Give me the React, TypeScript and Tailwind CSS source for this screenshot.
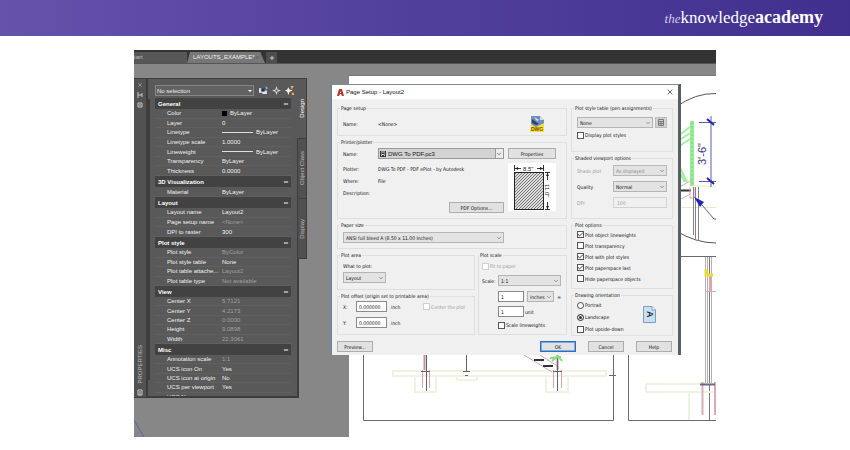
import type { ReactNode } from "react";
import { Check, ChevronDown, Minus, Plus, X } from "lucide-react";

type Property = {
  label: string;
  value: string;
  muted?: boolean;
  line?: boolean;
  swatch?: boolean;
};

type PropertySection = {
  title: string;
  height: string;
  rows: Property[];
};

const SECTIONS: PropertySection[] = [
  {
    title: "General",
    height: "h-[78px]",
    rows: [
      { label: "Color", value: "ByLayer", swatch: true },
      { label: "Layer", value: "0" },
      { label: "Linetype", value: "ByLayer", line: true },
      { label: "Linetype scale", value: "1.0000" },
      { label: "Lineweight", value: "ByLayer", line: true },
      { label: "Transparency", value: "ByLayer" },
      { label: "Thickness", value: "0.0000" },
    ],
  },
  {
    title: "3D Visualization",
    height: "h-[21px]",
    rows: [{ label: "Material", value: "ByLayer" }],
  },
  {
    title: "Layout",
    height: "h-[40px]",
    rows: [
      { label: "Layout name", value: "Layout2" },
      { label: "Page setup name", value: "<None>", muted: true },
      { label: "DPI to raster", value: "300" },
    ],
  },
  {
    title: "Plot style",
    height: "h-[49px]",
    rows: [
      { label: "Plot style", value: "ByColor", muted: true },
      { label: "Plot style table", value: "None" },
      { label: "Plot table attache...", value: "Layout2", muted: true },
      { label: "Plot table type", value: "Not available", muted: true },
    ],
  },
  {
    title: "View",
    height: "h-[58px]",
    rows: [
      { label: "Center X", value: "5.7121", muted: true },
      { label: "Center Y", value: "4.2173", muted: true },
      { label: "Center Z", value: "0.0000", muted: true },
      { label: "Height", value: "9.0898", muted: true },
      { label: "Width", value: "22.3061", muted: true },
    ],
  },
  {
    title: "Misc",
    height: "h-[58px]",
    rows: [
      { label: "Annotation scale", value: "1:1", muted: true },
      { label: "UCS icon On", value: "Yes" },
      { label: "UCS icon at origin", value: "No" },
      { label: "UCS per viewport", value: "Yes" },
      { label: "UCS Name", value: "" },
    ],
  },
];

const PLOT_OPTIONS = [
  { label: "Plot object lineweights", checked: true },
  { label: "Plot transparency", checked: false },
  { label: "Plot with plot styles", checked: true },
  { label: "Plot paperspace last", checked: true },
  { label: "Hide paperspace objects", checked: false },
];

function Group({
  title,
  className = "",
  children,
}: {
  title: string;
  className?: string;
  children: ReactNode;
}) {
  return (
    <fieldset className={`min-w-0 border border-[#dfdfdf] px-[5px] ${className}`}>
      <legend className="-ml-[3px] h-2 px-px leading-[8px]">{title}</legend>
      {children}
    </fieldset>
  );
}

function Select({
  label,
  value,
  className = "",
  disabled = false,
}: {
  label: string;
  value: string;
  className?: string;
  disabled?: boolean;
}) {
  return (
    <span className={`grid h-[11px] items-center ${className}`}>
      <select
        aria-label={label}
        defaultValue={value}
        disabled={disabled}
        className="col-start-1 row-start-1 h-full w-full appearance-none border border-[#b4b4b4] bg-[#e3e3e3] pl-[2px] leading-[8px] disabled:border-[#b8b8b8] disabled:text-[#8a8a8a]"
      >
        <option>{value}</option>
      </select>
      <ChevronDown
        className="pointer-events-none col-start-1 row-start-1 mr-[2px] justify-self-end text-[#444]"
        size={6}
      />
    </span>
  );
}

function CheckBox({
  label,
  checked = false,
  disabled = false,
}: {
  label: string;
  checked?: boolean;
  disabled?: boolean;
}) {
  return (
    <label
      className={`flex items-center gap-px whitespace-nowrap ${disabled ? "text-[#9a9a9a]" : ""}`}
    >
      <span className="grid size-[7px] shrink-0">
        <input
          type="checkbox"
          defaultChecked={checked}
          disabled={disabled}
          className="peer col-start-1 row-start-1 size-[7px] appearance-none border border-[#555] bg-white disabled:border-[#cfcfcf]"
        />
        <Check
          className="pointer-events-none invisible col-start-1 row-start-1 text-[#222] peer-checked:visible"
          size={7}
          strokeWidth={3}
        />
      </span>
      {label}
    </label>
  );
}

function Radio({ label, checked = false }: { label: string; checked?: boolean }) {
  return (
    <label className="flex h-3 items-center gap-px">
      <input
        type="radio"
        name="orientation"
        defaultChecked={checked}
        className="size-[7px] shrink-0 appearance-none rounded-full border border-[#444] bg-white checked:bg-[#333] checked:shadow-[inset_0_0_0_1px_#fff]"
      />
      {label}
    </label>
  );
}

function NumberBox({ label, value, className }: { label: string; value: string; className: string }) {
  return (
    <input
      type="text"
      aria-label={label}
      defaultValue={value}
      className={`h-[11px] border border-[#8a8a8a] bg-white pl-[2px] leading-[8px] ${className}`}
    />
  );
}

function PushButton({ children, className = "" }: { children: ReactNode; className?: string }) {
  return (
    <button
      type="button"
      className={`h-[11px] border bg-[#e1e1e1] text-center leading-[8px] ${className}`}
    >
      {children}
    </button>
  );
}

function Drawing() {
  return (
    <svg
      className="h-full w-full"
      viewBox="134 64 582 373"
      preserveAspectRatio="xMinYMin slice"
      fill="none"
    >
      <rect x="134" y="64" width="582" height="373" fill="#878787" />
      <path d="M348 75.500H716" stroke="#777" />
      <rect x="349" y="76" width="367" height="361" fill="#fff" />
      <path d="M134 420 144 437" stroke="#5763b5" />

      {/* viewport frames */}
      <g stroke="#6b6b6b">
        <path d="M363.500 340V420.500H613.500V340" />
        <path d="M716 420.500H628.500V256.500H716" />
        <path d="M609 375.500H616" />
      </g>

      {/* footing on the left sheet */}
      <g stroke="#f0f3e2" strokeWidth="2">
        <path d="M393 371H606V376H393Z" />
        <path d="M415 377V392H436V377M546 377V392H568V377M457 377V380H477V377" />
      </g>
      <g stroke="#d9a3ab">
        <path d="M422.500 370V388M429.500 370V388M553.500 370V388M561.500 370V388" />
        <path d="M524 355 552 372M540 355 559 367" />
      </g>
      <path d="M424.500 355V370M557.500 355V370" stroke="#c1959e" strokeWidth="2" />
      <path
        d="M426.500 355V391M557.500 355V391M466.500 355V371M421 371.500H430M553 371.500H562M463 371.500H470M465 375.500H468"
        stroke="#62626c"
      />
      <path d="M534 360H544M543 366H553" stroke="#333" strokeWidth="2" />
      <path d="M550 358 561 357M552 361 558 356 562 361" stroke="#83dc83" strokeWidth="2" />

      {/* detail bubble */}
      <path d="M676 107Q695 93 716 93.500M676 231Q696 243 716 243" stroke="#555" />
      <path d="M692 121V186" stroke="#98ec98" strokeWidth="4" />
      <path d="M692 122V186" stroke="#6fdc6f" strokeDasharray="2 2" />
      <path
        d="M678 136 690 127M678 141 690 133M678 147 690 139M678 164 687 182M678 170 685 182"
        stroke="#a1eda1"
        strokeWidth="2"
      />
      <path d="M678 190.500H691" stroke="#333" strokeWidth="2" />
      <path d="M678 188 692 180M678 201 690 194M690 187V198H694V187" stroke="#e0a9b5" />
      <path d="M693 186H716M678 207.500H716" stroke="#e0eec6" />
      <path d="M693.500 187V235M695.500 187V239M698.500 187V241" stroke="#8c7d8a" />
      <path d="M711 116V187M699 122.500H716M699 181.500H716" stroke="#5c5ca8" />
      <path d="M707 119 714 125M707 178 714 184" stroke="#2424b5" strokeWidth="2" />
      <path d="M694 197 704 202 700 207Z" fill="#2424b5" />
      <path d="M702 205 714 219H716" stroke="#5c5ca8" />
      <text
        transform="rotate(-90 706 165)"
        x="706"
        y="165"
        fontSize="11"
        fill="#34347e"
        fontFamily="Liberation Sans, sans-serif"
      >
        3'-6"
      </text>

      {/* column on the right sheet */}
      <path d="M705.500 257V384M707.500 257V384M711.500 257V384" stroke="#b0b0b0" />
      <path d="M709.500 257V420" stroke="#777" />
      <path d="M710.500 276V291" stroke="#dda4ad" strokeWidth="3" />
      <path d="M706 269V275H713" stroke="#e9de32" strokeWidth="3" />
      <path d="M705 291.500H716" stroke="#c8adb3" />
      <path d="M646 384H716M646 392H716M646 384V392M689 393V420" stroke="#eef2df" strokeWidth="2" />
      <path d="M702.500 382V415M715 382V415" stroke="#d9adb5" strokeWidth="2" />
      <path d="M700 384.500H715" stroke="#646c88" strokeWidth="2" />
    </svg>
  );
}

function PropertiesPalette() {
  return (
    <section className="absolute top-[14px] left-0 flex font-['Liberation_Sans',Arial,sans-serif] text-[6px] leading-[8px] text-[#f0f0f0]">
      <header className="flex w-3 flex-col items-center justify-between border-y border-[#3a3a3a] bg-[#525252] pt-[3px] text-[#c8c8c8]">
        <div className="flex flex-col items-center gap-1">
          <X size={6} />
          <svg width="6" height="6" viewBox="0 0 6 6" stroke="currentColor" fill="none">
            <path d="M1 0V6M5 1V5M1 3H5" />
          </svg>
          <svg width="6" height="6" viewBox="0 0 6 6" stroke="currentColor" fill="none">
            <path d="M1 1H5V5H1ZM2 3H4" />
          </svg>
        </div>
        <div className="flex flex-col items-center gap-[5px] pb-px">
          <h2 className="rotate-180 text-[#bdbdbd] [writing-mode:vertical-rl]">PROPERTIES</h2>
          <svg width="6" height="7" viewBox="0 0 6 7" stroke="currentColor" fill="none">
            <path d="M1 1H5V6H1ZM2 3H4M2 5H4" />
          </svg>
        </div>
      </header>
      <div className="flex h-[320px] w-[153px] gap-[5px] overflow-hidden border-2 border-t border-[#3d3d3d] bg-[#595959] pr-[6px]">
        <div className="mt-5 mb-4 w-[2px] shrink-0 bg-[#3c3c3c]" />
        <div className="min-w-0 flex-1 pt-[6px]">
          <div className="mb-[2px] flex h-[11px] items-center gap-[7px]">
            <span className="grid h-full w-[99px] shrink-0 items-center">
              <select
                aria-label="Selection"
                className="col-start-1 row-start-1 h-full w-full appearance-none border border-[#858585] bg-[#626262] pl-px text-[#eee]"
              >
                <option>No selection</option>
              </select>
              <span className="pointer-events-none col-start-1 row-start-1 mr-[2px] justify-self-end border-x-2 border-t-2 border-x-transparent border-t-white" />
            </span>
            <svg className="-ml-[2px] size-[9px] shrink-0" viewBox="0 0 8 8">
              <path d="M0 2H4V6H0ZM3 4H7V7H3Z" fill="#e0e5ee" />
              <path d="M2 2H5V5H2Z" fill="#23304a" />
              <path d="M6 0 8 2 6 3Z" fill="#8cb5e0" />
            </svg>
            <svg className="-mx-[3px] size-[9px] shrink-0" viewBox="0 0 8 8">
              <path d="M4 0 5 3 8 4 5 5 4 8 3 5 0 4 3 3Z" fill="#ddd" />
              <circle cx="4" cy="4" r="1" fill="#555" />
            </svg>
            <svg className="size-[9px] shrink-0" viewBox="0 0 8 8">
              <path d="M3 1 4 3 7 4 4 5 3 8 2 5 0 4 2 3Z" fill="#eee" />
              <path d="M5 0H8L6 3ZM6 6H8V8H6Z" fill="#f3a354" />
            </svg>
          </div>
          {SECTIONS.map((section) => (
            <section key={section.title} className={`flex flex-col ${section.height}`}>
              <h3 className="flex h-[11px] shrink-0 items-center justify-between bg-[#424242] pr-[2px] pl-[3px] font-bold text-white">
                {section.title}
                <Minus size={6} strokeWidth={4} />
              </h3>
              <dl className="flex flex-1 flex-col">
                {section.rows.map((row) => (
                  <div
                    key={row.label}
                    className="flex min-h-[9px] flex-1 items-center border-b border-[#606060] pl-3"
                  >
                    <dt className="w-[55px] shrink-0 whitespace-nowrap">{row.label}</dt>
                    <dd
                      className={`flex items-center gap-[3px] whitespace-nowrap ${row.muted ? "text-[#a0a0a0]" : ""}`}
                    >
                      {row.swatch && <span className="size-[5px] bg-black" />}
                      {row.line && <span className="h-px w-[31px] bg-[#ddd]" />}
                      {row.value}
                    </dd>
                  </div>
                ))}
              </dl>
            </section>
          ))}
        </div>
      </div>
      <nav className="-ml-[2px] flex w-[10px] flex-col items-center text-[#bdbdbd]">
        <button
          type="button"
          className="flex h-[61px] w-full items-center justify-center border border-l-0 border-[#3d3d3d] bg-[#595959] text-white"
        >
          <span className="rotate-180 [writing-mode:vertical-rl]">Design</span>
        </button>
        <button
          type="button"
          className="flex h-[60px] w-full items-center justify-center border border-t-0 border-[#3d3d3d] bg-[#505050]"
        >
          <span className="rotate-180 [writing-mode:vertical-rl]">Object Class</span>
        </button>
        <button
          type="button"
          className="flex h-[60px] w-full items-center justify-center border border-t-0 border-[#3d3d3d] bg-[#505050]"
        >
          <span className="rotate-180 [writing-mode:vertical-rl]">Display</span>
        </button>
      </nav>
    </section>
  );
}

function PaperPreview() {
  return (
    <svg className="h-12 w-12 shrink-0" viewBox="0 0 48 48" fill="none">
      <rect width="48" height="48" fill="#fff" />
      <defs>
        <pattern id="hatch" width="3" height="3" patternUnits="userSpaceOnUse">
          <rect width="3" height="3" fill="#dcdcdc" />
          <path d="M0 3 3 0" stroke="#777" />
        </pattern>
      </defs>
      <rect x="6.500" y="9.500" width="29" height="37" fill="url(#hatch)" stroke="#222" />
      <path
        d="M6.500 2V8M35.500 2V8M7 5.500H13M29 5.500H35M37 9.500H42M37 46.500H42M39.500 10V17M39.500 39V46"
        stroke="#333"
      />
      <path d="M7 5.500 10 4V7ZM35 5.500 32 4V7ZM39.500 10 38 13H41ZM39.500 46 38 43H41Z" fill="#222" />
      <text x="15" y="8" fontSize="6" fill="#222" fontFamily="Liberation Sans, sans-serif">
        8.5"
      </text>
      <text
        transform="rotate(90 37 21)"
        x="37"
        y="21"
        fontSize="6"
        fill="#222"
        fontFamily="Liberation Sans, sans-serif"
      >
        11.0"
      </text>
    </svg>
  );
}

function PageSetupDialog() {
  return (
    <section
      role="dialog"
      aria-label="Page Setup - Layout2"
      className="absolute top-5 left-[197px] w-[350px] border-t border-r-3 border-l border-t-[#7d8a90] border-r-[#5a5f63] border-l-[#5f8798] bg-[#f0f0f0] font-['DejaVu_Sans_Condensed','Open_Sans',sans-serif] text-[5px] leading-[8px] text-[#111]"
    >
      <header className="flex h-[14px] items-center justify-between bg-white pr-1 pl-[5px] font-['Liberation_Sans',Arial,sans-serif] text-[6px]">
        <h2 className="flex items-center gap-[2px]">
          <svg width="7" height="7" viewBox="0 0 7 7">
            <path d="M0 7 2 0H5L7 7H5L4 5H3L2 7Z" fill="#b23a2c" />
            <path d="M3 4 3.500 2 4 4Z" fill="#fff" />
          </svg>
          Page Setup - Layout2
        </h2>
        <button type="button" aria-label="Close">
          <X size={8} />
        </button>
      </header>

      <div className="px-[5px] pt-[5px] pb-[3px]">
        <div className="flex gap-1">
          <div className="flex flex-1 flex-col gap-[2px]">
            <Group title="Page setup">
              <div className="flex h-[23px] items-center">
                <span className="w-[35px]">Name:</span>
                <span className="flex-1">&lt;None&gt;</span>
                <svg className="mr-4 h-4 w-[15px]" viewBox="0 0 15 16">
                  <path d="M1 0H10L14 4V16H1Z" fill="#6f8fc0" />
                  <path d="M10 0 14 4H10Z" fill="#d5e0ef" />
                  <path d="M2 3 9 8 6 9 2 7Z" fill="#2d4468" />
                  <path d="M4 1 9 4 7 5Z" fill="#dfe8f2" />
                  <path d="M1 8 6 11 14 7V16H0Z" fill="#f0e531" />
                  <text
                    x="1"
                    y="15"
                    fontSize="5"
                    fontWeight="bold"
                    fill="#8c3a1c"
                    fontFamily="Liberation Sans, sans-serif"
                  >
                    DWG
                  </text>
                </svg>
              </div>
            </Group>

            <Group title="Printer/plotter" className="pr-[10px] pb-[5px]">
              <div className="mt-[2px] flex gap-1">
                <div className="flex flex-1 items-center">
                  <span className="w-[35px]">Name:</span>
                  <span className="grid h-[11px] flex-1 items-center">
                    <select
                      aria-label="Printer name"
                      className="col-start-1 row-start-1 h-full w-full appearance-none border border-[#999] bg-[#d3d3d3] pl-[9px] font-['Liberation_Sans',Arial,sans-serif] text-[6px] leading-[8px]"
                    >
                      <option>DWG To PDF.pc3</option>
                    </select>
                    <svg
                      className="pointer-events-none col-start-1 row-start-1 ml-[2px] size-[6px]"
                      viewBox="0 0 6 6"
                    >
                      <path d="M0 0H6V6H0Z" fill="#333" />
                      <path d="M1 1H5M1 3H2M4 3H5M1 5 3 3 5 5" stroke="#ddd" fill="none" />
                    </svg>
                    <span className="pointer-events-none col-start-1 row-start-1 mr-px flex h-[9px] w-2 items-center justify-self-end border-l border-[#999] bg-[#ececec]">
                      <ChevronDown size={6} />
                    </span>
                  </span>
                </div>
                <PushButton className="w-12 border-[#adadad]">Properties</PushButton>
              </div>
              <div className="mt-1 flex gap-1">
                <div className="flex flex-1 flex-col">
                  <dl className="grid grid-cols-[35px_1fr] leading-[12px] whitespace-nowrap">
                    <dt>Plotter:</dt>
                    <dd>DWG To PDF - PDF ePlot - by Autodesk</dd>
                    <dt>Where:</dt>
                    <dd>File</dd>
                    <dt>Description:</dt>
                    <dd />
                  </dl>
                  <PushButton className="mt-[3px] w-[55px] self-end border-[#adadad]">
                    PDF Options...
                  </PushButton>
                </div>
                <PaperPreview />
              </div>
            </Group>

            <Group title="Paper size" className="pb-[5px]">
              <Select
                label="Paper size"
                value="ANSI full bleed A (8.50 x 11.00 Inches)"
                className="mt-[3px] w-[161px]"
              />
            </Group>

            <div className="flex gap-[3px]">
              <div className="flex flex-1 flex-col gap-[2px]">
                <Group title="Plot area" className="pb-[6px]">
                  <div className="mt-[3px] mb-[2px]">What to plot:</div>
                  <Select label="What to plot" value="Layout" className="w-[43px]" />
                </Group>
                <Group title="Plot offset (origin set to printable area)" className="pb-[6px]">
                  <div className="mt-px flex items-center">
                    <span className="w-[13px]">X:</span>
                    <NumberBox label="X offset" value="0.000000" className="w-[31px]" />
                    <span className="ml-1 flex-1">inch</span>
                    <span className="mr-1">
                      <CheckBox label="Center the plot" disabled />
                    </span>
                  </div>
                  <div className="mt-[5px] flex items-center">
                    <span className="w-[13px]">Y:</span>
                    <NumberBox label="Y offset" value="0.000000" className="w-[31px]" />
                    <span className="ml-1">inch</span>
                  </div>
                </Group>
              </div>

              <Group title="Plot scale" className="w-[89px] pl-[3px]">
                <div className="mt-[3px] mb-[5px]">
                  <CheckBox label="Fit to paper" disabled />
                </div>
                <div className="flex items-center">
                  <span className="w-4">Scale:</span>
                  <Select label="Scale" value="1:1" className="flex-1" />
                </div>
                <div className="mt-[5px] ml-4 flex items-center">
                  <NumberBox label="Plotted length" value="1" className="w-[26px]" />
                  <Select label="Unit" value="inches" className="mx-[3px] w-[30px]" />=
                </div>
                <div className="mt-1 ml-4 flex items-center gap-px">
                  <NumberBox label="Drawing units" value="1" className="w-[26px]" />
                  unit
                </div>
                <div className="mt-1 ml-4">
                  <CheckBox label="Scale lineweights" />
                </div>
              </Group>
            </div>
          </div>

          <div className="flex w-[102px] flex-col gap-[2px]">
            <Group title="Plot style table (pen assignments)" className="h-12 whitespace-nowrap">
              <div className="mt-[5px] mb-[3px] flex gap-[2px]">
                <Select label="Plot style table" value="None" className="w-[76px]" />
                <button
                  type="button"
                  aria-label="Edit plot style table"
                  className="flex h-[11px] w-3 items-center justify-center border border-[#bbb] bg-[#d2d2d2]"
                >
                  <svg width="6" height="7" viewBox="0 0 6 7" fill="none" stroke="#777">
                    <path d="M.500 .500H5.500V6.500H.500ZM1 2.500H5M1 4.500H5M3 2V6" />
                  </svg>
                </button>
              </div>
              <CheckBox label="Display plot styles" />
            </Group>

            <Group title="Shaded viewport options" className="h-[65px]">
              <div className="mt-[3px] flex items-center text-[#9a9a9a]">
                <span className="flex-1">Shade plot</span>
                <Select label="Shade plot" value="As displayed" className="w-[54px]" disabled />
              </div>
              <div className="mt-[5px] flex items-center">
                <span className="flex-1">Quality</span>
                <Select label="Quality" value="Normal" className="w-[54px]" />
              </div>
              <div className="mt-[5px] flex items-center text-[#9a9a9a]">
                <span className="flex-1">DPI</span>
                <input
                  type="text"
                  aria-label="DPI"
                  defaultValue="100"
                  disabled
                  className="h-[11px] w-[54px] border border-[#d2d2d2] pl-[3px] leading-[8px]"
                />
              </div>
            </Group>

            <Group title="Plot options" className="h-[68px]">
              <ul>
                {PLOT_OPTIONS.map((option) => (
                  <li key={option.label} className="flex h-[11px] items-center">
                    <CheckBox label={option.label} checked={option.checked} />
                  </li>
                ))}
              </ul>
            </Group>

            <Group title="Drawing orientation" className="flex-1">
              <div className="flex items-center justify-between pr-[11px]">
                <div>
                  <Radio label="Portrait" />
                  <Radio label="Landscape" checked />
                  <div className="flex h-3 items-center">
                    <CheckBox label="Plot upside-down" />
                  </div>
                </div>
                <svg className="mb-[6px] h-[17px] w-[13px]" viewBox="0 0 13 17">
                  <path d="M.500 .500H9L12.500 4V16.500H.500Z" fill="#c9dff2" stroke="#7f9db9" />
                  <path d="M9 .500V4H12.500" fill="#fff" stroke="#7f9db9" />
                  <text
                    transform="rotate(90 4 5)"
                    x="4"
                    y="5"
                    fontSize="9"
                    fontWeight="bold"
                    fill="#222"
                    fontFamily="Liberation Sans, sans-serif"
                  >
                    A
                  </text>
                </svg>
              </div>
            </Group>
          </div>
        </div>

        <footer className="mt-[5px] flex gap-3 pr-px">
          <PushButton className="mr-auto w-9 border-[#adadad]">Preview...</PushButton>
          <PushButton className="w-9 border-[#2a6fc0] shadow-[inset_0_0_0_1px_#7aaade]">OK</PushButton>
          <PushButton className="w-9 border-[#adadad]">Cancel</PushButton>
          <PushButton className="w-9 border-[#adadad]">Help</PushButton>
        </footer>
      </div>
    </section>
  );
}

export default function App() {
  return (
    <div className="min-h-screen bg-white">
      <header className="flex h-9 items-center justify-end bg-linear-to-r from-[#6452ab] via-[#51409b] to-[#412f8e] pr-[27px]">
        <a
          href="#home"
          className="flex items-baseline font-['Liberation_Serif',serif] text-[18px] leading-9 text-white"
        >
          <span className="text-[13px] text-[#cfc8ea] italic">the</span>
          <span className="text-[17px]">knowledge</span>
          <span className="font-bold">academy</span>
        </a>
      </header>

      <main className="mx-auto mt-[14px] max-w-[582px] overflow-hidden">
        <nav className="flex h-[14px] items-end border-b border-[#555] bg-[#333] font-['Liberation_Sans',Arial,sans-serif] text-[6px] leading-[11px] text-[#f0f0f0]">
          <a href="#start" className="-ml-1 w-[57px] bg-[#575757] text-[#bbb]">
            Start
          </a>
          <a
            href="#layout"
            className="flex w-[78px] items-center justify-between bg-[#777] pr-[6px] pl-[6px] [clip-path:polygon(3px_0,94%_0,100%_100%,0_100%)]"
          >
            LAYOUTS_EXAMPLE*
            <X className="text-[#444]" size={5} />
          </a>
          <button
            type="button"
            aria-label="New layout"
            className="ml-px flex h-[11px] w-[11px] items-center justify-center bg-[#4d4d4d]"
          >
            <Plus size={6} strokeWidth={3} />
          </button>
        </nav>
        <div className="relative h-[373px] overflow-hidden">
          <Drawing />
          <PropertiesPalette />
          <PageSetupDialog />
        </div>
      </main>
    </div>
  );
}
